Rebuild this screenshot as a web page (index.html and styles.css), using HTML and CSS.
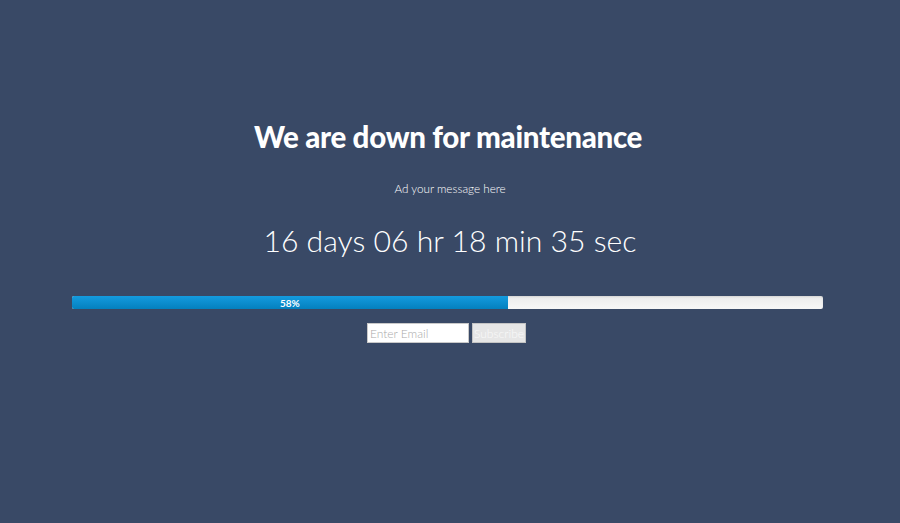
FILE: index.html
```html
<!DOCTYPE html>
<html lang="en">
<head>
  <meta charset="UTF-8">
  <meta name="viewport" content="width=device-width, initial-scale=1.0">
  <title>Maintenance</title>
  <link rel="stylesheet" href="styles.css">
</head>
<body>
  <div class="page">
    <h1 class="title">We are down for maintenance</h1>
    <p class="message">Ad your message here</p>
    <div class="countdown">16 days 06 hr 18 min 35 sec</div>

    <div class="progress">
      <div class="bar" style="width: 58%;">58%</div>
    </div>

    <form class="subscribe">
      <input type="email" class="email" placeholder="Enter Email">
      <button type="button" class="btn">Subscribe</button>
    </form>
  </div>
</body>
</html>
```

FILE: styles.css
```css
* {
  margin: 0;
  padding: 0;
  box-sizing: border-box;
}

body {
  background-color: #394966;
  color: #ffffff;
  font-family: Lato, "Open Sans", sans-serif;
  height: 523px;
  overflow: hidden;
}

.page {
  padding-top: 117px;
  text-align: center;
}

.title {
  font-size: 29.5px;
  font-weight: 900;
  line-height: 40px;
  letter-spacing: -0.3px;
  padding-right: 4px;
}

.message {
  font-size: 11.7px;
  font-weight: 300;
  line-height: 18px;
  margin-top: 22px;
}

.countdown {
  font-size: 30.2px;
  font-weight: 300;
  line-height: 40px;
  margin-top: 23px;
}

.progress {
  width: 751px;
  height: 13px;
  margin: 36px 0 0 72px;
  background: linear-gradient(to bottom, #ebebeb, #f7f7f7);
  border-radius: 2px;
  overflow: hidden;
  box-shadow: inset 0 1px 2px rgba(0, 0, 0, 0.1);
}

.bar {
  height: 100%;
  background: linear-gradient(to bottom, #149bdf, #0480be);
  color: #ffffff;
  font-size: 10px;
  font-weight: 700;
  line-height: 14px;
  text-align: center;
}

.subscribe {
  display: flex;
  justify-content: center;
  gap: 3px;
  margin-top: 14px;
  padding-right: 7px;
}

.email {
  width: 102px;
  height: 20px;
  border: 1px solid #c9c9c9;
  padding: 0 2px;
  font-family: Lato, sans-serif;
  font-size: 12px;
  font-weight: 300;
  color: #333;
}

.email::placeholder {
  color: #aaaaaa;
}

.btn {
  width: 54px;
  height: 20px;
  border: 1px solid #c4c4c4;
  background: #e6e6e6;
  color: #fafafa;
  font-family: Lato, sans-serif;
  font-size: 12px;
  font-weight: 300;
}
```
